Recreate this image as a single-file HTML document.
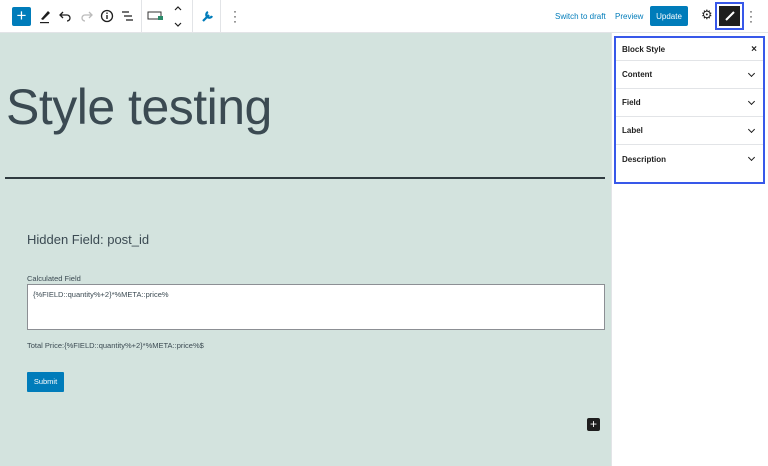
<!DOCTYPE html>
<html><head><style>
*{box-sizing:border-box;margin:0;padding:0}
body{width:768px;height:466px;overflow:hidden;font-family:"Liberation Sans",sans-serif;background:#fff;position:relative}
.tb{position:absolute;left:0;top:0;width:768px;height:33px;background:#fff;border-bottom:1px solid #e2e4e7}
.main{position:absolute;left:0;top:33px;width:611px;height:433px;background:#d3e3de}
.side{position:absolute;left:611px;top:33px;width:157px;height:433px;background:#fff;border-left:1px solid #e2e4e7}
.abs{position:absolute}
.sep{position:absolute;top:0;width:1px;height:33px;background:#e2e4e7}
.panel{position:absolute;left:614px;top:36px;width:151px;height:148px;border:2px solid #3858e9}
.row{height:28px;border-bottom:1px solid #e2e4e7;font-size:8px;font-weight:bold;color:#1e1e1e;padding:0 6px;display:flex;align-items:center;justify-content:space-between}
.chev{width:5px;height:5px;border-right:1.2px solid #1e1e1e;border-bottom:1.2px solid #1e1e1e;transform:rotate(45deg);margin-right:3px;margin-top:-3px}
</style></head><body>
<div class="tb">
 <div class="abs" style="left:12px;top:7px;width:19px;height:19px;background:#007cba;border-radius:2px;color:#fff;font-size:17px;line-height:18px;text-align:center">+</div>
 <svg class="abs" style="left:38px;top:8px" width="14" height="16" viewBox="0 0 14 16"><path d="M3 11 L10 3 L12 5 L5 12 Z" fill="#1e1e1e"/><rect x="2" y="14" width="9" height="1.2" fill="#1e1e1e"/></svg>
 <svg class="abs" style="left:59px;top:10px" width="13" height="12" viewBox="0 0 13 12"><path d="M4 2 L1 5 L4 8 M1 5 H8 A3 3 0 0 1 8 11" fill="none" stroke="#1e1e1e" stroke-width="1.3"/></svg>
 <svg class="abs" style="left:80px;top:10px" width="13" height="12" viewBox="0 0 13 12"><path d="M9 2 L12 5 L9 8 M12 5 H5 A3 3 0 0 0 5 11" fill="none" stroke="#bbb" stroke-width="1.3"/></svg>
 <svg class="abs" style="left:100px;top:9px" width="14" height="14" viewBox="0 0 14 14"><circle cx="7" cy="7" r="5.5" fill="none" stroke="#1e1e1e" stroke-width="1.3"/><rect x="6.3" y="6" width="1.4" height="4" fill="#1e1e1e"/><rect x="6.3" y="3.5" width="1.4" height="1.4" fill="#1e1e1e"/></svg>
 <svg class="abs" style="left:121px;top:10px" width="13" height="12" viewBox="0 0 13 12"><path d="M1 2H8M3 6H11M5 10H12" stroke="#1e1e1e" stroke-width="1.3"/></svg>
 <div class="sep" style="left:141px"></div>
 <svg class="abs" style="left:147px;top:10px" width="18" height="12" viewBox="0 0 18 12"><rect x="1" y="2" width="13" height="7" fill="none" stroke="#333" stroke-width="1"/><rect x="11" y="6" width="5" height="4" fill="#2a8a6a"/></svg>
 <svg class="abs" style="left:173px;top:5px" width="10" height="24" viewBox="0 0 10 24"><path d="M2 5 L5 2 L8 5 M2 18 L5 21 L8 18" fill="none" stroke="#1e1e1e" stroke-width="1.2"/></svg>
 <div class="sep" style="left:192px"></div>
 <svg class="abs" style="left:201px;top:9px" width="14" height="14" viewBox="0 0 14 14"><path d="M2 12 L8 6 M7 3 A3 3 0 1 0 11 7" stroke="#007cba" stroke-width="2.2" fill="none"/></svg>
 <div class="sep" style="left:220px"></div>
 <div class="abs" style="left:233px;top:9px;color:#1e1e1e;font-size:12px;line-height:5px;width:2px">·<br>·<br>·</div>
 <div class="abs" style="left:555px;top:12px;font-size:8px;color:#007cba">Switch to draft</div>
 <div class="abs" style="left:615px;top:12px;font-size:8px;color:#007cba">Preview</div>
 <div class="abs" style="left:650px;top:6px;width:38px;height:20px;background:#007cba;border-radius:2px;color:#fff;font-size:8px;line-height:21px;text-align:center">Update</div>
 <div class="abs" style="left:701px;top:7px;font-size:13px;color:#1e1e1e">⚙</div>
 <div class="abs" style="left:715px;top:2px;width:29px;height:28px;border:2px solid #3858e9;padding:2px"><div style="width:21px;height:20px;background:#1e1e1e;position:relative"><svg style="position:absolute;left:5px;top:4px" width="12" height="12" viewBox="0 0 12 12"><path d="M2 10 L10 2" stroke="#fff" stroke-width="2"/></svg></div></div>
 <div class="abs" style="left:749px;top:9px;color:#1e1e1e;font-size:12px;line-height:5px;width:2px">·<br>·<br>·</div>
</div>
<div class="main">
 <div class="abs" style="left:6px;top:45px;font-size:50px;color:#3b4a52;letter-spacing:-0.5px">Style testing</div>
 <div class="abs" style="left:5px;top:144px;width:600px;height:2px;background:#2f3b40"></div>
 <div class="abs" style="left:27px;top:199px;font-size:13px;color:#3b4a52">Hidden Field: post_id</div>
 <div class="abs" style="left:27px;top:241px;font-size:7.5px;color:#3b4a52">Calculated Field</div>
 <div class="abs" style="left:27px;top:251px;width:578px;height:46px;background:#fff;border:1px solid #8c8f94;font-size:7.5px;color:#3b4a52;padding:5px 5px">{%FIELD::quantity%+2}*%META::price%</div>
 <div class="abs" style="left:27px;top:308px;font-size:7.5px;color:#3b4a52">Total Price:{%FIELD::quantity%+2}*%META::price%$</div>
 <div class="abs" style="left:27px;top:339px;width:37px;height:20px;background:#007cba;border-radius:1px;color:#fff;font-size:7.5px;line-height:20px;text-align:center">Submit</div>
 <div class="abs" style="left:587px;top:385px;width:13px;height:13px;background:#1e1e1e;border-radius:2px;color:#fff;font-size:12px;line-height:12px;text-align:center">+</div>
</div>
<div class="side"></div>
<div class="panel">
 <div class="row" style="height:23px">Block Style<span style="font-size:10px">×</span></div>
 <div class="row">Content<span class="chev"></span></div>
 <div class="row">Field<span class="chev"></span></div>
 <div class="row">Label<span class="chev"></span></div>
 <div class="row" style="border-bottom:none">Description<span class="chev"></span></div>
</div>
</body></html>
